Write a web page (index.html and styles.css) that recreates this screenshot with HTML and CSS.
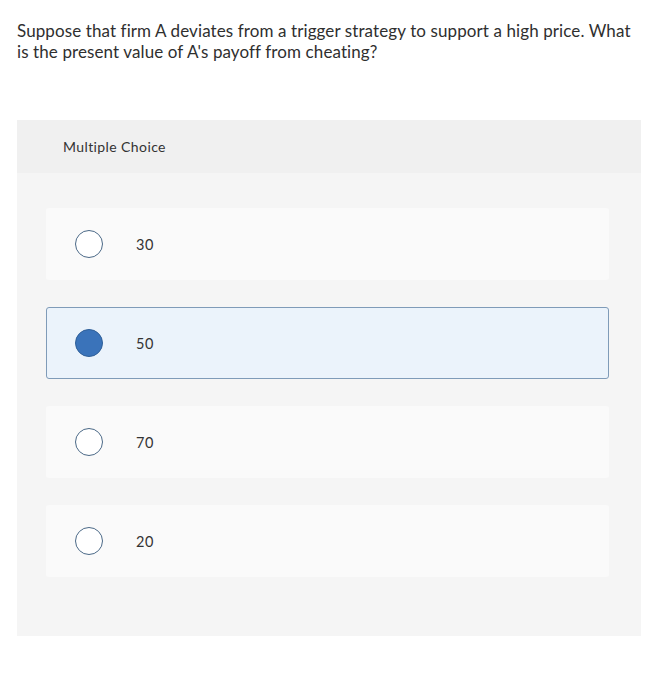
FILE: index.html
```html
<!DOCTYPE html>
<html>
<head>
<meta charset="utf-8">
<link rel="stylesheet" href="styles.css">
</head>
<body>
<div class="page">
  <p class="question">Suppose that firm A deviates from a trigger strategy to support a high price. What is the present value of A's payoff from cheating?</p>
  <div class="panel">
    <div class="panel-header">Multiple Choice</div>
    <div class="options">
      <div class="option"><span class="radio"></span><span class="label">30</span></div>
      <div class="option selected"><span class="radio"></span><span class="label">50</span></div>
      <div class="option"><span class="radio"></span><span class="label">70</span></div>
      <div class="option"><span class="radio"></span><span class="label">20</span></div>
    </div>
  </div>
</div>
</body>
</html>
```
FILE: styles.css
```css
html, body {
  margin: 0;
  padding: 0;
  background: #ffffff;
}
body {
  font-family: Lato, "Open Sans", "Liberation Sans", sans-serif;
  color: #333333;
}
.page {
  padding: 20px 24px 0 17px;
}
.question {
  margin: 0;
  font-size: 17px;
  line-height: 21px;
  letter-spacing: 0.1px;
  width: 624px;
  color: #2f2f2f;
}
.panel {
  margin-top: 58px;
  width: 624px;
  background: #f5f5f5;
}
.panel-header {
  height: 53px;
  box-sizing: border-box;
  padding-left: 46px;
  display: flex;
  align-items: center;
  background: #f0f0f0;
  font-size: 14px;
  letter-spacing: 0.4px;
  color: #333;
}
.options {
  padding: 35px 32px 59px 29px;
  display: flex;
  flex-direction: column;
  gap: 27px;
}
.option {
  height: 72px;
  box-sizing: border-box;
  background: #fafafa;
  border: 1px solid transparent;
  border-radius: 3px;
  display: flex;
  align-items: center;
  padding-left: 28px;
}
.option.selected {
  background: #ebf3fb;
  border-color: #7f9bb8;
}
.radio {
  width: 28px;
  height: 28px;
  box-sizing: border-box;
  border-radius: 50%;
  border: 1.5px solid #4b6987;
  background: #ffffff;
  flex: none;
}
.selected .radio {
  background: #3a73ba;
  border-color: #2f5f98;
}
.label {
  margin-left: 33px;
  font-size: 14.5px;
  letter-spacing: 0.5px;
  color: #333;
}
```
